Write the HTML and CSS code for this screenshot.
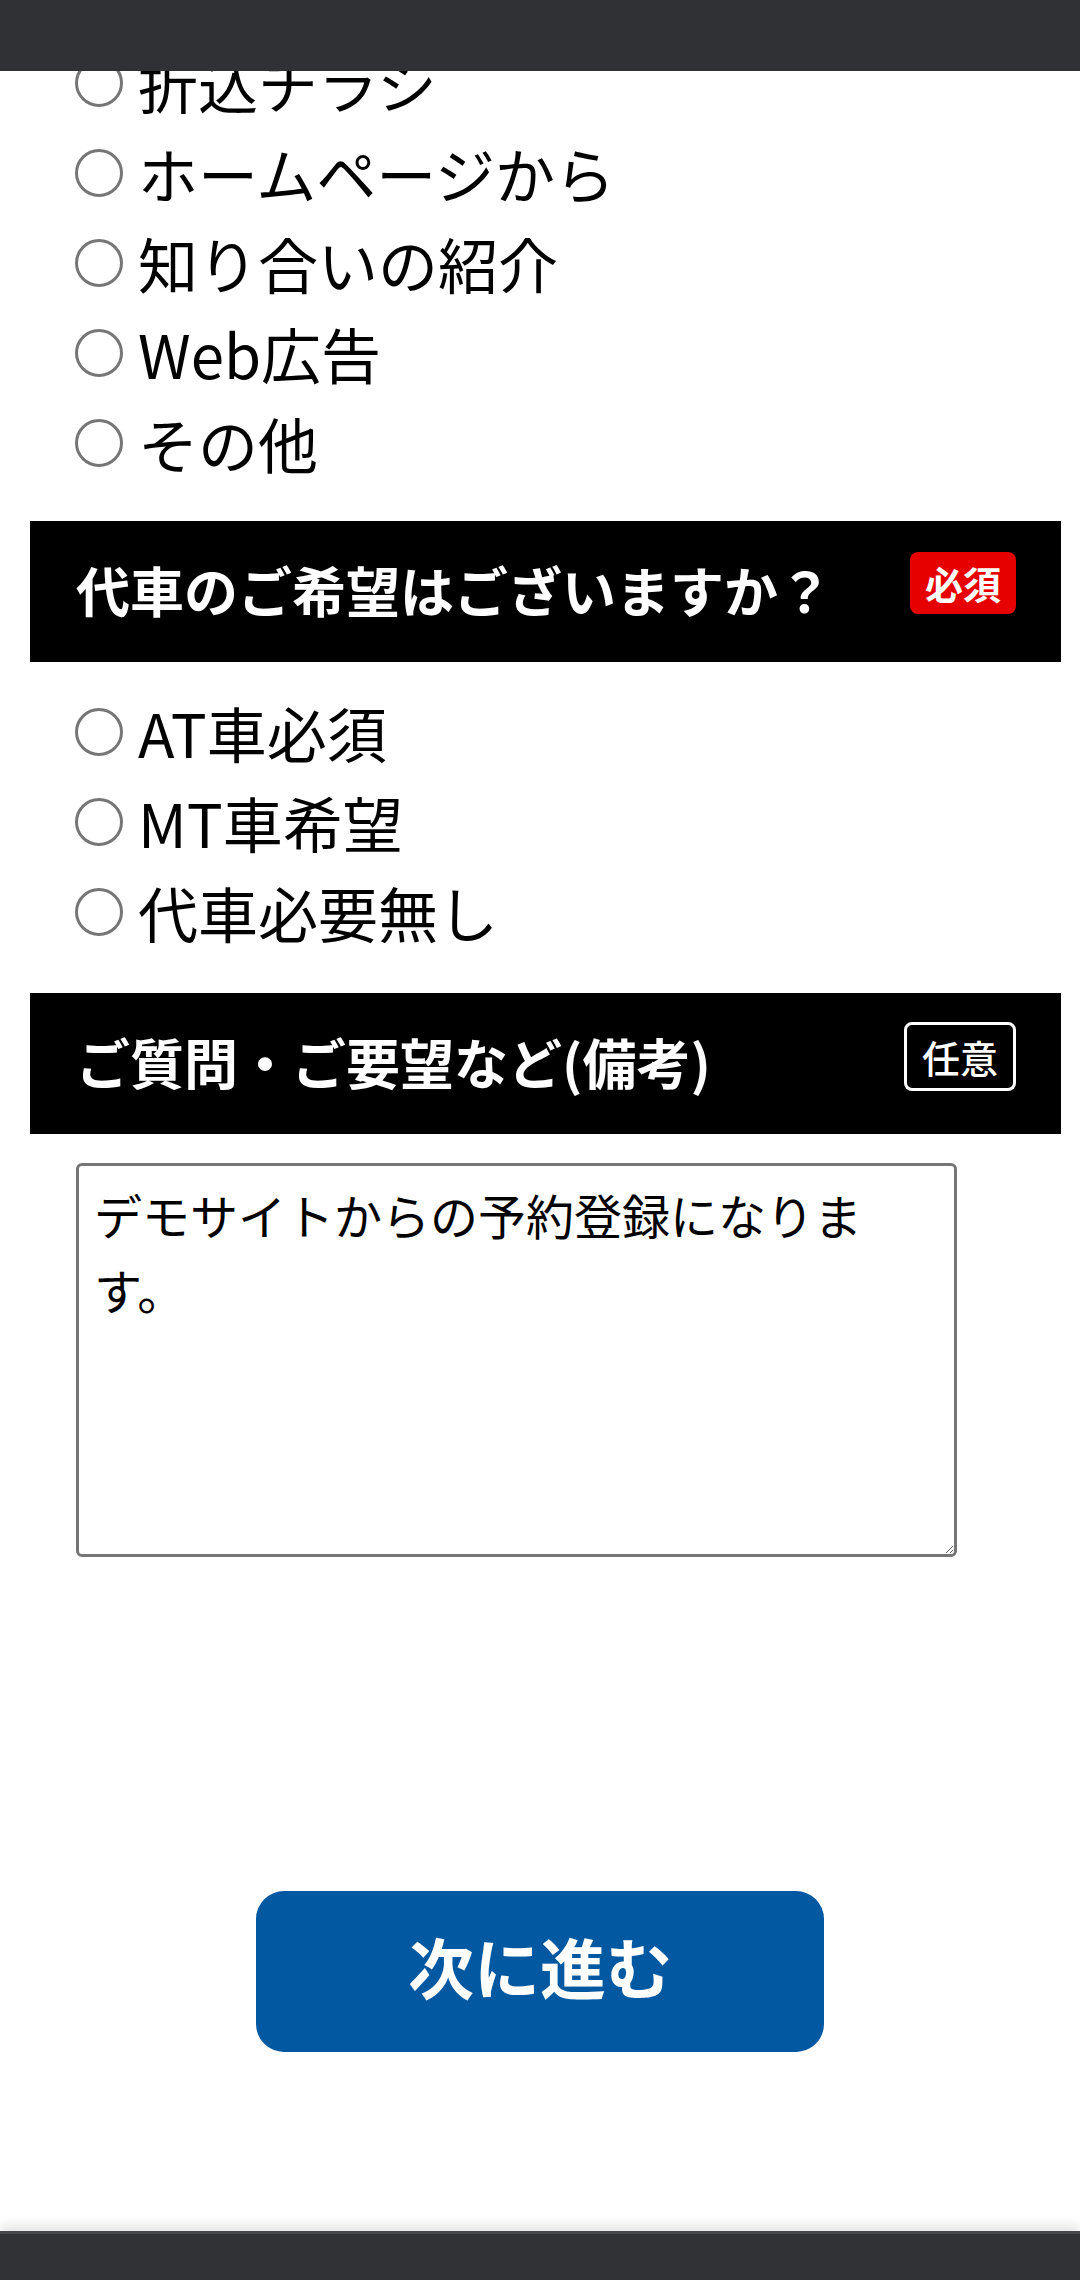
FILE: index.html
```html
<!DOCTYPE html>
<html lang="ja">
<head>
<meta charset="utf-8">
<title>予約フォーム</title>
<link rel="stylesheet" href="styles.css">
</head>
<body>
<div class="topbar"></div>
<main class="form">
  <div class="radios radios-first">
    <label class="radio"><input type="radio" name="src"><span>折込チラシ</span></label>
    <label class="radio"><input type="radio" name="src"><span>ホームページから</span></label>
    <label class="radio"><input type="radio" name="src"><span>知り合いの紹介</span></label>
    <label class="radio"><input type="radio" name="src"><span>Web広告</span></label>
    <label class="radio"><input type="radio" name="src"><span>その他</span></label>
  </div>

  <div class="section-head">
    <h2 class="section-title">代車のご希望はございますか？</h2>
    <span class="badge badge-required">必須</span>
  </div>
  <div class="radios">
    <label class="radio"><input type="radio" name="car"><span>AT車必須</span></label>
    <label class="radio"><input type="radio" name="car"><span>MT車希望</span></label>
    <label class="radio"><input type="radio" name="car"><span>代車必要無し</span></label>
  </div>

  <div class="section-head">
    <h2 class="section-title">ご質問・ご要望など(備考)</h2>
    <span class="badge badge-optional">任意</span>
  </div>
  <div class="note-wrap">
    <textarea class="note">デモサイトからの予約登録になります。</textarea>
  </div>

  <div class="actions">
    <button class="next" type="button">次に進む</button>
  </div>
</main>
<div class="bottombar"></div>
</body>
</html>
```

FILE: styles.css
```css
html, body {
  margin: 0;
  padding: 0;
  background: #ffffff;
}

body {
  font-family: "Noto Sans CJK JP", "Noto Sans", sans-serif;
  color: #000000;
  width: 1080px;
  height: 2280px;
  overflow: hidden;
}

.topbar {
  position: fixed;
  top: 0;
  left: 0;
  right: 0;
  height: 71px;
  background: #303135;
  z-index: 10;
}

.bottombar {
  position: fixed;
  left: 0;
  right: 0;
  bottom: 0;
  height: 46px;
  background: #313236;
  border-top: 3px solid #47484b;
  box-shadow: 0 -6px 10px rgba(0, 0, 0, 0.10);
  z-index: 10;
}

.form {
  display: flex;
  flex-direction: column;
  margin: 0 19px 0 30px;
  padding-top: 38px;
}

.radios {
  display: flex;
  flex-direction: column;
  padding: 25px 0 36px 45px;
}

.radios-first {
  padding-top: 0;
  padding-bottom: 33px;
}

.radio {
  display: flex;
  align-items: center;
  gap: 15px;
  height: 90px;
  font-size: 60px;
  line-height: 1;
  font-weight: 400;
}

.radio input {
  appearance: none;
  -webkit-appearance: none;
  margin: 0;
  width: 48px;
  height: 48px;
  border: 3px solid #767676;
  border-radius: 50%;
  background: #ffffff;
  flex: none;
  box-sizing: border-box;
}

.section-head {
  display: flex;
  align-items: center;
  justify-content: space-between;
  height: 141px;
  background: #000000;
  padding: 0 45px 0 46px;
}

.section-title {
  margin: 0;
  color: #ffffff;
  font-size: 54px;
  font-weight: 700;
  line-height: 1;
  letter-spacing: 0;
  margin-top: -4px;
}

.badge {
  display: flex;
  align-items: center;
  justify-content: center;
  color: #ffffff;
  font-size: 38px;
  line-height: 1;
  border-radius: 8px;
  box-sizing: border-box;
  margin-bottom: 16px;
}

.badge-required {
  width: 106px;
  height: 62px;
  background: #e60000;
  font-weight: 700;
  margin-bottom: 18px;
}

.badge-optional {
  width: 112px;
  height: 69px;
  border: 3px solid #ffffff;
  font-weight: 500;
  margin-bottom: 14px;
}

.note-wrap {
  display: flex;
  padding: 29px 0 0 46px;
}

.note {
  width: 881px;
  height: 394px;
  box-sizing: border-box;
  border: 3px solid #767676;
  border-radius: 6px;
  padding: 11px 60px 10px 15px;
  font-family: "Noto Sans CJK JP", "Noto Sans", sans-serif;
  font-size: 48px;
  line-height: 75px;
  color: #000000;
  background: #ffffff;
  resize: vertical;
  overflow: hidden;
  margin: 0;
}

.actions {
  display: flex;
  justify-content: center;
  padding-top: 334px;
  margin-left: -30px;
  margin-right: -19px;
}

.next {
  width: 568px;
  height: 161px;
  border: none;
  border-radius: 28px;
  background: #0359a1;
  color: #ffffff;
  font-family: "Noto Sans CJK JP", "Noto Sans", sans-serif;
  font-size: 66px;
  font-weight: 700;
  line-height: 1;
  padding: 0 0 14px;
  cursor: pointer;
}
```
